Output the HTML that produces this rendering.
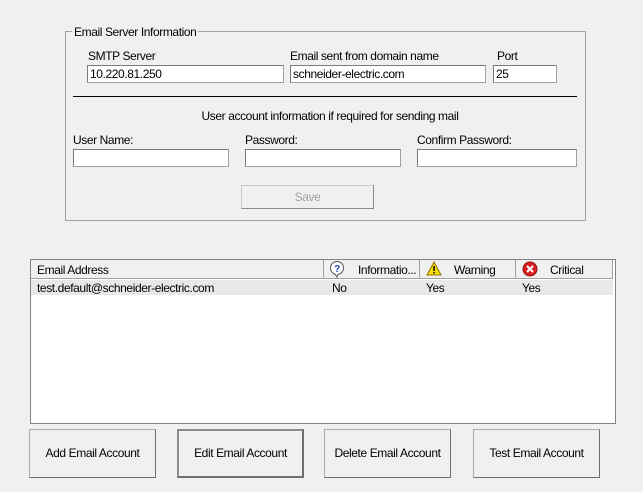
<!DOCTYPE html>
<html><head><style>
body{margin:0;width:643px;height:492px;background:#f0f0f0;font-family:"Liberation Sans",sans-serif;font-size:12px;color:#000;position:relative;overflow:hidden;letter-spacing:-0.4px}
.a{position:absolute;white-space:nowrap}
.grp{position:absolute;left:65px;top:31px;width:519px;height:188px;border:1px solid #a0a0a0}
.inp{position:absolute;background:#fff;border:1px solid #a0a0a0;border-top-color:#7a7a7a;border-left-color:#7a7a7a;box-sizing:border-box;height:18px;padding:2px 0 0 2px;line-height:13px}
.btn{position:absolute;box-sizing:border-box;border:1px solid #adadad;border-right-color:#6e6e6e;border-bottom-color:#6e6e6e;background:#f0f0f0;text-align:center;line-height:47px;height:49px;top:429px;width:127px}
.hd{position:absolute;top:260px;height:19px;border-right:1px solid #a0a0a0;border-bottom:1px solid #a0a0a0;box-sizing:border-box;line-height:20px;background:#f0f0f0}
</style></head><body>
<div class="grp"></div>
<div class="a" style="left:72px;top:25px;background:#f0f0f0;padding:0 2px">Email Server Information</div>
<div class="a" style="left:88px;top:49px">SMTP Server</div>
<div class="a" style="left:290px;top:49px">Email sent from domain name</div>
<div class="a" style="left:497px;top:49px">Port</div>
<div class="inp" style="left:87px;top:65px;width:197px">10.220.81.250</div>
<div class="inp" style="left:290px;top:65px;width:196px">schneider-electric.com</div>
<div class="inp" style="left:493px;top:65px;width:64px">25</div>
<div class="a" style="left:73px;top:96px;width:504px;height:1px;background:#000"></div>
<div class="a" style="left:0;width:660px;text-align:center;top:109px">User account information if required for sending mail</div>
<div class="a" style="left:73px;top:133px">User Name:</div>
<div class="a" style="left:245px;top:133px">Password:</div>
<div class="a" style="left:417px;top:133px">Confirm Password:</div>
<div class="inp" style="left:73px;top:149px;width:156px"></div>
<div class="inp" style="left:245px;top:149px;width:156px"></div>
<div class="inp" style="left:417px;top:149px;width:160px"></div>
<div class="a" style="left:241px;top:185px;width:133px;height:24px;box-sizing:border-box;border:1px solid #c8c8c8;border-right-color:#8a8a8a;border-bottom-color:#8a8a8a;text-align:center;line-height:22px;color:#a0a0a0">Save</div>
<div class="a" style="left:30px;top:259px;width:586px;height:165px;box-sizing:border-box;border:1px solid #828282;background:#fff"></div>
<div class="hd" style="left:31px;width:293px;padding-left:6px">Email Address</div>
<div class="hd" style="left:324px;width:96px;padding-left:34px"><svg class="a" style="left:5px;top:1px" width="16" height="17" viewBox="0 0 16 17"><circle cx="8" cy="7" r="6.5" fill="#fff" stroke="#555"/><path d="M6 13l2 3 1-3" fill="#fff" stroke="#555"/><text x="8" y="11" font-size="10" font-weight="bold" fill="#2040c0" text-anchor="middle" font-family="Liberation Sans">?</text></svg>Informatio...</div>
<div class="hd" style="left:420px;width:96px;padding-left:34px"><svg class="a" style="left:6px;top:1px" width="16" height="15" viewBox="0 0 16 15"><path d="M8 1L15 14H1Z" fill="#f8e000" stroke="#907000"/><rect x="7.3" y="5" width="1.5" height="5" fill="#000"/><rect x="7.3" y="11" width="1.5" height="1.5" fill="#000"/></svg>Warning</div>
<div class="hd" style="left:516px;width:97px;padding-left:34px"><svg class="a" style="left:6px;top:1px" width="16" height="16" viewBox="0 0 16 16"><circle cx="8" cy="8" r="7" fill="#d82020" stroke="#901010"/><path d="M5 5l6 6M11 5l-6 6" stroke="#fff" stroke-width="2"/></svg>Critical</div>
<div class="a" style="left:31px;top:280px;width:582px;height:15px;background:#e8e8e8"></div>
<div class="a" style="left:37px;top:281px">test.default@schneider-electric.com</div>
<div class="a" style="left:332px;top:281px">No</div>
<div class="a" style="left:426px;top:281px">Yes</div>
<div class="a" style="left:522px;top:281px">Yes</div>
<div class="btn" style="left:29px">Add Email Account</div>
<div class="btn" style="left:177px;border:2px solid #6e6e6e;border-top-color:#8a8a8a;border-left-color:#8a8a8a;line-height:45px">Edit Email Account</div>
<div class="btn" style="left:324px">Delete Email Account</div>
<div class="btn" style="left:473px">Test Email Account</div>
</body></html>
